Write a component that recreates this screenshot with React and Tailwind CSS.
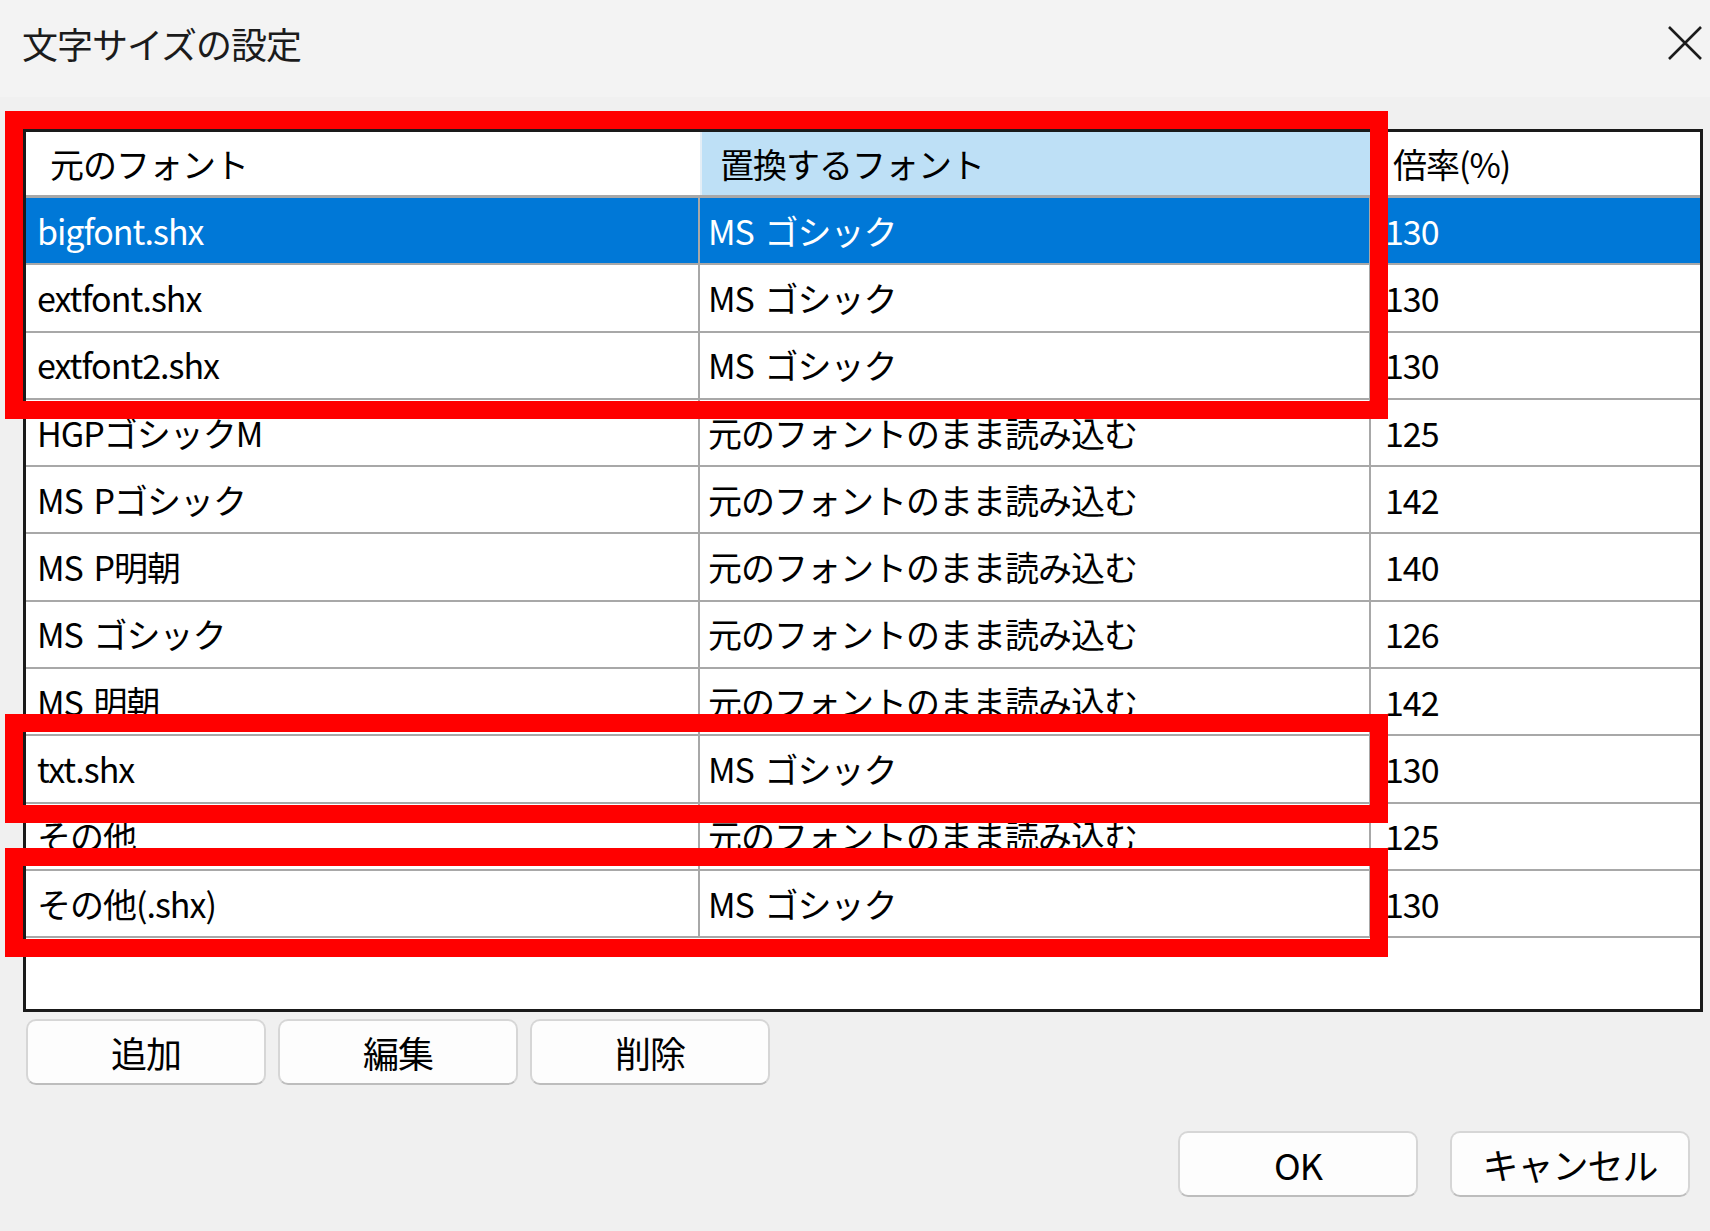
const rows = [
  { src: "bigfont.shx", dst: "MS ゴシック", rate: "130", selected: true },
  { src: "extfont.shx", dst: "MS ゴシック", rate: "130" },
  { src: "extfont2.shx", dst: "MS ゴシック", rate: "130" },
  { src: "HGPゴシックM", dst: "元のフォントのまま読み込む", rate: "125" },
  { src: "MS Pゴシック", dst: "元のフォントのまま読み込む", rate: "142" },
  { src: "MS P明朝", dst: "元のフォントのまま読み込む", rate: "140" },
  { src: "MS ゴシック", dst: "元のフォントのまま読み込む", rate: "126" },
  { src: "MS 明朝", dst: "元のフォントのまま読み込む", rate: "142" },
  { src: "txt.shx", dst: "MS ゴシック", rate: "130" },
  { src: "その他", dst: "元のフォントのまま読み込む", rate: "125" },
  { src: "その他(.shx)", dst: "MS ゴシック", rate: "130" },
];

function Row({ row }) {
  const base = row.selected ? "bg-[#0078d7] text-white" : "bg-white text-black";
  return (
    <div className={`flex h-[67.3px] border-b-2 border-[#a8a8a8] ${base}`}>
      <div className="w-[674px] flex items-center pl-[11px] border-r-2 border-[#a8a8a8] whitespace-nowrap overflow-hidden">
        {row.src}
      </div>
      <div className="w-[671px] flex items-center pl-[8px] border-r-2 border-[#a8a8a8] whitespace-nowrap overflow-hidden">
        {row.dst}
      </div>
      <div className="flex-1 flex items-center pl-[14px]">{row.rate}</div>
    </div>
  );
}

function Btn({ children }) {
  return (
    <button className="w-[240px] h-[66px] rounded-[10px] border-2 border-[#d6d6d6] border-b-[#bdbdbd] bg-[#fdfdfd] text-[36px] leading-none text-black flex items-center justify-center tracking-[-1px]">
      {children}
    </button>
  );
}

export default function App() {
  return (
    <div className="relative w-[1710px] h-[1231px] bg-[#f0f0f0] font-['Noto_Sans_CJK_JP','Noto_Sans',sans-serif] overflow-hidden">
      {/* title bar */}
      <div className="h-[97px] bg-[#f3f3f3] flex items-center justify-between pb-[12px] pl-[22px] pr-[7px]">
        <span className="text-[36px] leading-none text-[#1b1b1b] tracking-[-1px]">文字サイズの設定</span>
        <svg width="36" height="36" viewBox="0 0 36 36" className="text-[#1b1b1b]">
          <path d="M2 2 L34 34 M34 2 L2 34" stroke="currentColor" strokeWidth="2.6" fill="none" />
        </svg>
      </div>

      {/* table */}
      <div className="mt-[32px] ml-[23px] w-[1680px] h-[883px] border-[3px] border-[#1a1a1a] bg-white flex flex-col text-[34px] leading-none tracking-[-1px] [word-spacing:4px]">
        <div className="flex h-[66px] border-b-[3px] border-[#a8a8a8] text-black">
          <div className="w-[674px] flex items-center pl-[24px] bg-white">元のフォント</div>
          <div className="w-[671px] flex items-center pl-[18px] bg-[#bee0f6] border-l-2 border-[#e4eef6]">置換するフォント</div>
          <div className="flex-1 flex items-center pl-[22px] bg-white">倍率(%)</div>
        </div>
        {rows.map((r, i) => (
          <Row key={i} row={r} />
        ))}
      </div>

      {/* edit buttons */}
      <div className="mt-[7px] ml-[26px] flex gap-[12px]">
        <Btn>追加</Btn>
        <Btn>編集</Btn>
        <Btn>削除</Btn>
      </div>

      {/* ok / cancel */}
      <div className="mt-[46px] mr-[20px] flex justify-end gap-[32px]">
        <Btn>OK</Btn>
        <Btn>キャンセル</Btn>
      </div>

      {/* red annotation boxes */}
      <div className="absolute left-[5px] top-[111px] w-[1383px] h-[308px] border-[18px] border-[#ff0000]" />
      <div className="absolute left-[5px] top-[714px] w-[1383px] h-[109px] border-[18px] border-[#ff0000]" />
      <div className="absolute left-[5px] top-[848px] w-[1383px] h-[109px] border-[18px] border-[#ff0000]" />
    </div>
  );
}
